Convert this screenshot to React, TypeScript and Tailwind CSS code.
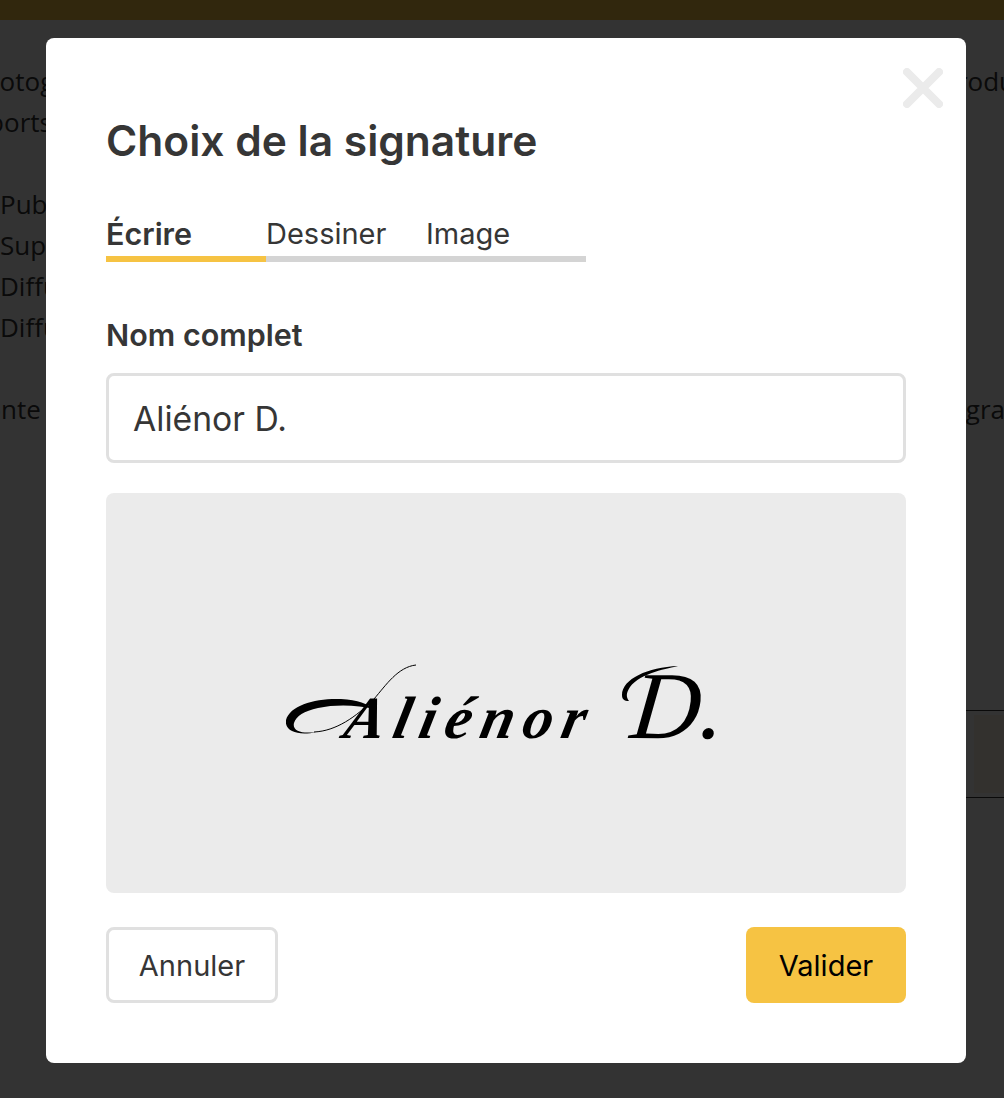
import React from "react";

const inter = "font-['Inter',sans-serif]";

function BackgroundRow({ left, right, className = "" }: { left: string; right?: string; className?: string }) {
  return (
    <div className={`flex h-[41px] items-center justify-between whitespace-nowrap leading-[41px] ${className}`}>
      <span>{left}</span>
      {right ? <span>{right}</span> : null}
    </div>
  );
}

function CloseIcon() {
  return (
    <svg width="40" height="40" viewBox="0 0 40 40" fill="none" stroke="#ebebeb" strokeWidth="8" strokeLinecap="round">
      <path d="M4 4 L36 36 M36 4 L4 36" />
    </svg>
  );
}

function Flourish() {
  return (
    <svg className="absolute left-0 top-[10px]" width="440" height="80" viewBox="0 0 440 80" fill="none">
      <path
        d="M0 57 C4 42 30 35 55 36 C72 37 82 41 88 46 C72 42 50 41 32 45 C18 48 10 53 8 60 C6 68 16 71 30 69 C14 73 -2 69 0 57 Z"
        fill="#000"
      />
      <path d="M28 69 C50 68 70 54 88 36 C100 22 112 4 130 2" stroke="#000" strokeWidth="1" />
      <path d="M336 32 C336 16 362 4 392 3 C384 5 354 10 344 24 C340 30 340 34 343 38 C338 38 336 36 336 32 Z" fill="#000" />
    </svg>
  );
}

export default function App() {
  return (
    <div className="relative h-[1098px] w-[1004px] overflow-hidden bg-white">
      <div className="h-5 bg-[#f6c343]" />
      <div className="pt-[41px] font-['Open_Sans',sans-serif] text-[26px] text-[#333]">
        <BackgroundRow left="Photographies" right="produ" className="ml-[-32px] mr-[-11px]" />
        <BackgroundRow left="Supports" className="ml-[-58px]" />
        <div className="h-[41px]" />
        <BackgroundRow left="Publication" />
        <BackgroundRow left="Support" />
        <BackgroundRow left="Diffusion" />
        <BackgroundRow left="Diffusion" />
        <div className="h-[41px]" />
        <BackgroundRow left="Conte" right="gratuit" className="ml-[-31px] mr-[-42px]" />
        <div className="ml-auto mt-[280px] flex h-[88px] w-[100px] items-stretch border-y border-[#333] py-1">
          <div className="ml-[70px] flex-1 bg-[#f6c343]/15" />
        </div>
      </div>

      <div className="absolute inset-0 bg-black/80" />

      <div className={`absolute left-[46px] top-[38px] flex h-[1025px] w-[920px] flex-col rounded-lg bg-white px-[60px] pt-[73px] text-[#363636] ${inter}`}>
        <button className="absolute right-[23px] top-[30px]" aria-label="Fermer">
          <CloseIcon />
        </button>
        <h1 className="text-[42.5px] font-semibold leading-[60px]">Choix de la signature</h1>

        <div className="mt-[41px] flex w-[480px] border-b-[6px] border-[#d4d4d4] text-[29px] leading-[40px]">
          <div className="relative h-[44px] w-[160px] pt-[2px] text-[30.5px] font-semibold">
            Écrire
            <div className="absolute inset-x-0 bottom-[-6px] h-[6px] bg-[#f6c343]" />
          </div>
          <div className="h-[44px] w-[160px] pt-[2px]">Dessiner</div>
          <div className="h-[44px] w-[160px] pt-[2px]">Image</div>
        </div>

        <label className="mt-[53px] text-[30.5px] font-semibold leading-[40px]">Nom complet</label>

        <div className="mt-[18px] flex h-[90px] items-center rounded-lg border-[3px] border-[#e0e0e0] pl-[24px] pt-[2px] text-[33.7px]">
          Aliénor D.
        </div>

        <div className="mt-[30px] flex h-[400px] items-center justify-center rounded-lg bg-[#ebebeb]">
          <div className="relative flex h-[80px] w-[440px] items-baseline pl-[60px] pt-[17px] font-['Liberation_Serif',serif] text-[60px] italic leading-[72px] text-black">
            <Flourish />
            <span className="-skew-x-12 font-bold tracking-[9px]">Aliénor</span>
            <span className="ml-[36px] -skew-x-6 text-[96px] leading-[72px]">D.</span>
          </div>
        </div>

        <div className="mt-[34px] flex items-center justify-between text-[29px]">
          <button className="h-[76px] w-[172px] rounded-lg border-[3px] border-[#e0e0e0] bg-white pt-[1px] text-[#363636]">Annuler</button>
          <button className="h-[76px] w-[160px] rounded-lg bg-[#f6c343] pt-[1px] text-black">Valider</button>
        </div>
      </div>
    </div>
  );
}
